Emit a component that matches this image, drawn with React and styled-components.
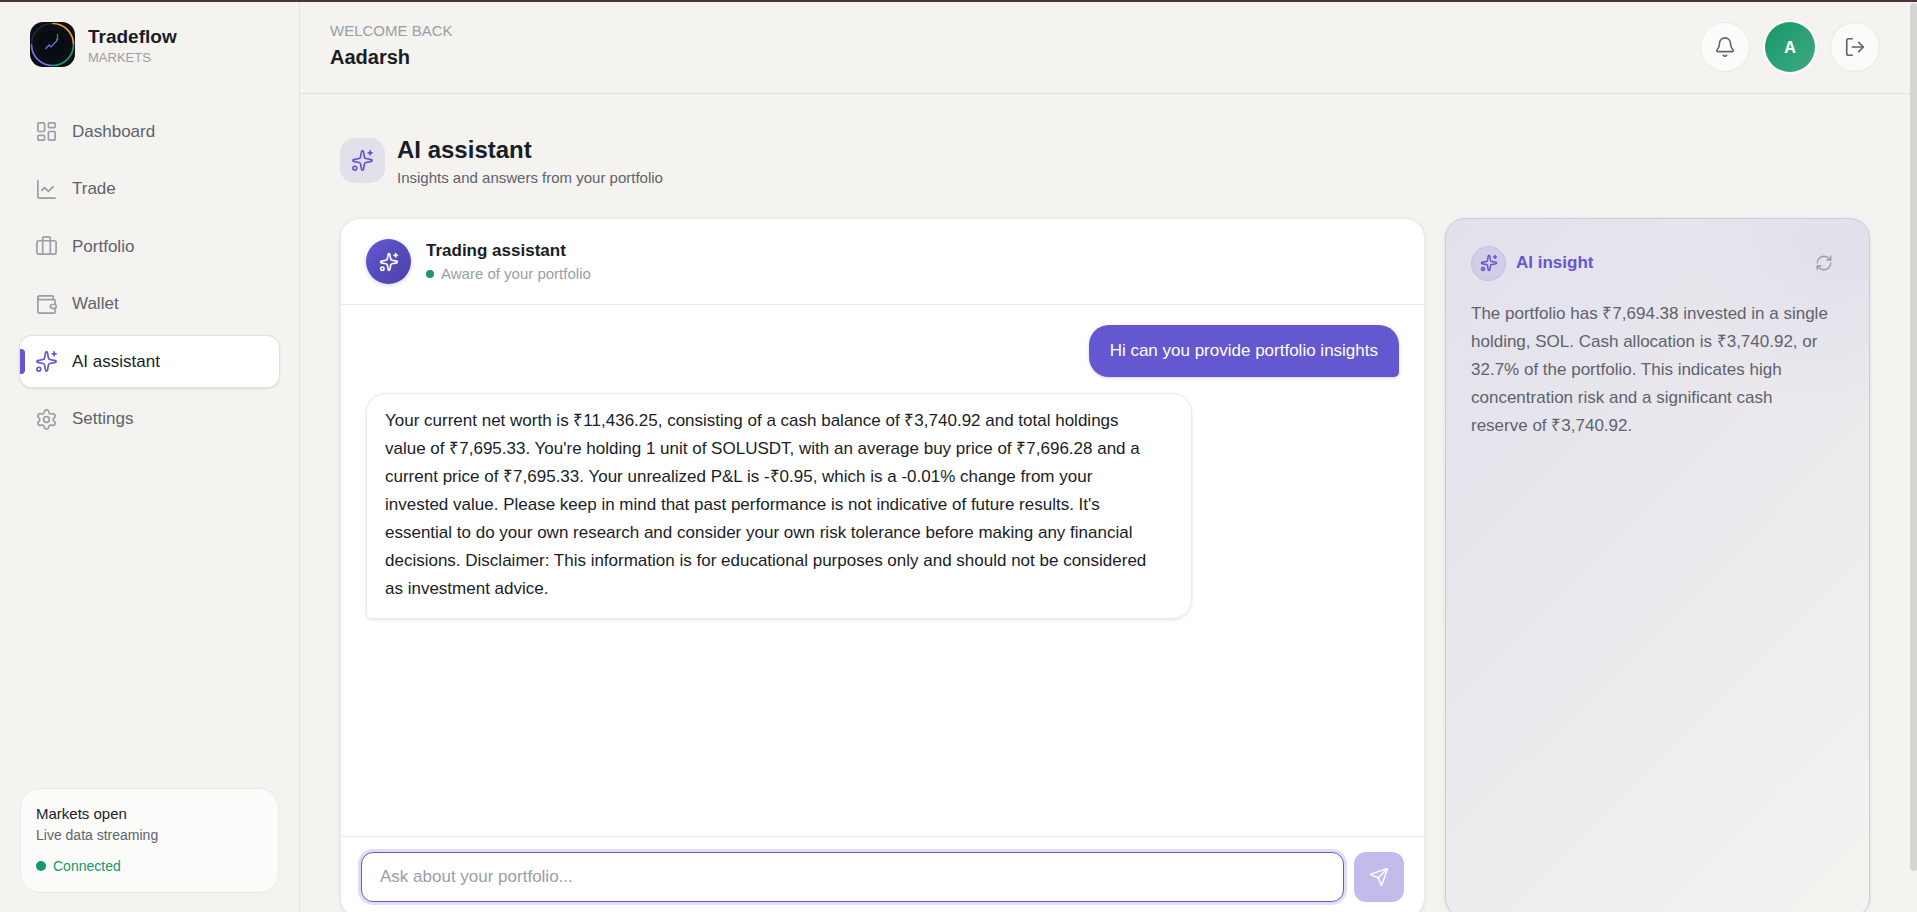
import React, { useState } from 'react'
import styled, { createGlobalStyle, css } from 'styled-components'
import {
  Bell,
  Briefcase,
  ChartLine,
  LayoutDashboard,
  LogOut,
  RefreshCw,
  Send,
  Settings,
  Sparkles,
  Wallet
} from 'lucide-react'

const navItems = [
  { label: 'Dashboard', icon: LayoutDashboard },
  { label: 'Trade', icon: ChartLine },
  { label: 'Portfolio', icon: Briefcase },
  { label: 'Wallet', icon: Wallet },
  { label: 'AI assistant', icon: Sparkles, active: true },
  { label: 'Settings', icon: Settings }
]

const messages = [
  { id: 1, from: 'user', text: 'Hi can you provide portfolio insights' },
  {
    id: 2,
    from: 'assistant',
    text:
      "Your current net worth is ₹11,436.25, consisting of a cash balance of ₹3,740.92 and total holdings value of ₹7,695.33. You're holding 1 unit of SOLUSDT, with an average buy price of ₹7,696.28 and a current price of ₹7,695.33. Your unrealized P&L is -₹0.95, which is a -0.01% change from your invested value. Please keep in mind that past performance is not indicative of future results. It's essential to do your own research and consider your own risk tolerance before making any financial decisions. Disclaimer: This information is for educational purposes only and should not be considered as investment advice."
  }
]

const Logo = () => (
  <LogoSvg viewBox="0 0 45 45" aria-hidden="true">
    <rect width="45" height="45" rx="13" fill="#0b0e15" />
    <circle cx="22" cy="22" r="13" fill="#080b12" />
    <g fill="none" strokeWidth="1.7">
      <path d="M1.5 22.5a21 21 0 0 1 21-21" stroke="#23283a" />
      <path d="M22.5 1.5a21 21 0 0 1 21 21" stroke="#f0a02c" />
      <path d="M43.5 22.5a21 21 0 0 1-21 21" stroke="#1c9a6c" />
      <path d="M22.5 43.5a21 21 0 0 1-21-21" stroke="#7b6fe0" />
      <path d="M15.5 27l3.500-4 2 2 6.500-7" stroke="#7b6fe0" strokeWidth="1.2" />
      <path d="M26 17.5h1.500v-5.500" stroke="#1c9a6c" strokeWidth="1.4" />
    </g>
  </LogoSvg>
)

const App = () => {
  const [draft, setDraft] = useState('')

  return (
    <Page>
      <GlobalStyle />
      <TopEdge />
      <Body>
        <Sidebar>
          <Brand>
            <Logo />
            <div>
              <BrandName>Tradeflow</BrandName>
              <BrandTag>MARKETS</BrandTag>
            </div>
          </Brand>
          <Nav>
            {navItems.map(({ label, icon: Icon, active }) => (
              <NavLink key={label} href="#" $active={active}>
                <Icon size={23} strokeWidth={1.75} />
                {label}
              </NavLink>
            ))}
          </Nav>
          <MarketStatus>
            <StatusTitle>Markets open</StatusTitle>
            <StatusText>Live data streaming</StatusText>
            <Connection><Dot $size={10} />Connected</Connection>
          </MarketStatus>
        </Sidebar>

        <Main>
          <Header>
            <div>
              <Welcome>WELCOME BACK</Welcome>
              <UserName>Aadarsh</UserName>
            </div>
            <Actions>
              <RoundButton aria-label="Notifications"><Bell size={22} strokeWidth={1.75} /></RoundButton>
              <Avatar aria-label="Account">A</Avatar>
              <RoundButton aria-label="Log out"><LogOut size={22} strokeWidth={1.75} /></RoundButton>
            </Actions>
          </Header>

          <Content>
            <PageTitle>
              <TitleIcon><Sparkles size={23} strokeWidth={1.75} /></TitleIcon>
              <div>
                <h1>AI assistant</h1>
                <p>Insights and answers from your portfolio</p>
              </div>
            </PageTitle>

            <Panels>
              <Chat>
                <ChatHeader>
                  <BotIcon><Sparkles size={20} strokeWidth={2} /></BotIcon>
                  <div>
                    <h2>Trading assistant</h2>
                    <Aware><Dot $size={8} />Aware of your portfolio</Aware>
                  </div>
                </ChatHeader>
                <Messages>
                  {messages.map(message => (
                    <Bubble key={message.id} $own={message.from === 'user'}>{message.text}</Bubble>
                  ))}
                </Messages>
                <Composer onSubmit={e => e.preventDefault()}>
                  <Input
                    aria-label="Message"
                    placeholder="Ask about your portfolio..."
                    value={draft}
                    onChange={e => setDraft(e.target.value)}
                  />
                  <SendButton type="submit" aria-label="Send" disabled={!draft}>
                    <Send size={20} strokeWidth={1.75} />
                  </SendButton>
                </Composer>
              </Chat>

              <Insight>
                <InsightHeader>
                  <InsightIcon><Sparkles size={18} strokeWidth={2} /></InsightIcon>
                  <h2>AI insight</h2>
                  <RefreshButton aria-label="Refresh insight"><RefreshCw size={18} strokeWidth={1.75} /></RefreshButton>
                </InsightHeader>
                <InsightText>
                  The portfolio has ₹7,694.38 invested in a single holding, SOL. Cash allocation is ₹3,740.92, or 32.7% of the portfolio. This indicates high concentration risk and a significant cash reserve of ₹3,740.92.
                </InsightText>
              </Insight>
            </Panels>
          </Content>
        </Main>
        <ScrollTrack><ScrollThumb /></ScrollTrack>
      </Body>
    </Page>
  )
}

const GlobalStyle = createGlobalStyle`
  * {
    box-sizing: border-box;
  }

  body {
    margin: 0;
    background: #f4f3ef;
    color: #1a1d26;
    font-family: "Liberation Sans", Arial, sans-serif;
    font-size: 17px;
  }

  h1, h2, p {
    margin: 0;
  }

  button, input {
    font: inherit;
  }

  button {
    padding: 0;
    border: 0;
    cursor: pointer;
  }

  svg {
    flex-shrink: 0;
  }
`

const Page = styled.div`
  height: 100vh;
  display: flex;
  flex-direction: column;
  overflow: hidden;
`

const TopEdge = styled.div`
  flex: 0 0 2px;
  background: #4b3242;
`

const Body = styled.div`
  flex: 1;
  min-height: 0;
  display: flex;
`

const Sidebar = styled.aside`
  flex: 0 0 300px;
  display: flex;
  flex-direction: column;
  padding: 20px 20px 19px;
  border-right: 1px solid #e3e2df;
`

const Brand = styled.div`
  display: flex;
  align-items: flex-end;
  gap: 13px;
  padding: 0 10px;
  margin-bottom: 39px;
`

const LogoSvg = styled.svg`
  width: 45px;
  height: 45px;
`

const BrandName = styled.div`
  font-size: 19px;
  line-height: 24px;
  font-weight: 700;
`

const BrandTag = styled.div`
  color: #9b9da7;
  font-size: 13px;
  line-height: 18px;
`

const Nav = styled.nav`
  height: 339px;
  display: flex;
  flex-direction: column;
  justify-content: space-between;
`

const NavLink = styled.a`
  height: 51px;
  position: relative;
  display: flex;
  align-items: center;
  gap: 14px;
  padding: 0 15px;
  border-radius: 12px;
  color: #5f626d;
  text-decoration: none;

  svg {
    color: #9b9da7;
  }

  ${({ $active }) => $active && css`
    background: #fff;
    color: #1a1d26;
    box-shadow: 0 0 0 1px #e3e2df, 0 1px 3px rgba(20, 20, 40, 0.2);

    svg {
      color: #6358d0;
    }

    &:before {
      content: "";
      position: absolute;
      left: 0;
      width: 5px;
      height: 25px;
      border-radius: 0 4px 4px 0;
      background: #6358d0;
    }
  `}
`

const MarketStatus = styled.div`
  margin-top: auto;
  padding: 15px 15px 16px;
  border: 1px solid #e9e9e8;
  border-radius: 20px;
  background: #fbfbf9;
`

const StatusTitle = styled.div`
  font-size: 15px;
  line-height: 20px;
`

const StatusText = styled.div`
  color: #5f626d;
  font-size: 14px;
  line-height: 22px;
`

const Connection = styled.div`
  display: flex;
  align-items: center;
  gap: 7px;
  margin-top: 10px;
  color: #17986b;
  font-size: 14px;
  line-height: 20px;
`

const Dot = styled.span`
  width: ${({ $size }) => $size}px;
  height: ${({ $size }) => $size}px;
  border-radius: 50%;
  background: #17986b;
`

const Main = styled.main`
  flex: 1;
  min-width: 0;
  overflow-y: auto;
  scrollbar-width: none;
`

const Header = styled.header`
  display: flex;
  align-items: center;
  justify-content: space-between;
  padding: 19px 30px 20px;
  border-bottom: 1px solid #e3e2df;
`

const Welcome = styled.div`
  color: #9b9da7;
  font-size: 15px;
  line-height: 20px;
`

const UserName = styled.div`
  font-size: 20px;
  line-height: 32px;
  font-weight: 700;
`

const Actions = styled.div`
  display: flex;
  gap: 15px;
`

const RoundButton = styled.button`
  width: 50px;
  height: 50px;
  display: flex;
  align-items: center;
  justify-content: center;
  border: 1px solid #e9e9e8;
  border-radius: 50%;
  background: #fbfbf9;
  color: #5f626d;
`

const Avatar = styled.button`
  width: 50px;
  height: 50px;
  border-radius: 50%;
  background: linear-gradient(135deg, #17986b, #40a880);
  box-shadow: 0 0 0 2px #fff;
  color: #fff;
  font-family: "Open Sans", sans-serif;
  font-size: 16px;
  line-height: 20px;
  font-weight: 700;
`

const Content = styled.div`
  padding: 40px;
`

const PageTitle = styled.div`
  display: flex;
  align-items: flex-start;
  gap: 12px;
  margin-bottom: 28px;

  h1 {
    font-size: 24px;
    line-height: 32px;
  }

  p {
    color: #5f626d;
    font-size: 15px;
    line-height: 24px;
  }
`

const TitleIcon = styled.div`
  width: 45px;
  height: 45px;
  display: flex;
  align-items: center;
  justify-content: center;
  margin-top: 4px;
  border-radius: 15px;
  background: #e2e0ea;
  color: #6358d0;
`

const Panels = styled.div`
  display: grid;
  grid-template-columns: minmax(0, 1fr) 425px;
  gap: 20px;
  min-height: 700px;
`

const Chat = styled.section`
  display: flex;
  flex-direction: column;
  border: 1px solid #eaeaec;
  border-radius: 20px;
  background: #fff;
  box-shadow: 0 1px 4px rgba(20, 20, 40, 0.08);
`

const ChatHeader = styled.div`
  display: flex;
  gap: 15px;
  padding: 20px 25px;
  border-bottom: 1px solid #eaeaec;

  h2 {
    font-size: 17px;
    line-height: 24px;
  }
`

const BotIcon = styled.div`
  width: 45px;
  height: 45px;
  display: flex;
  align-items: center;
  justify-content: center;
  border-radius: 50%;
  background: linear-gradient(135deg, #6358d0, #4a3fa8);
  box-shadow: 0 1px 4px rgba(99, 88, 208, 0.3);
  color: #fff;
`

const Aware = styled.div`
  display: flex;
  align-items: center;
  gap: 7px;
  color: #9b9da7;
  font-size: 15px;
  line-height: 21px;
`

const Messages = styled.div`
  flex: 1;
  display: flex;
  flex-direction: column;
  align-items: flex-start;
  gap: 16px;
  padding: 20px 25px;
`

const Bubble = styled.div`
  max-width: 80%;
  padding: 13px 35px 15px 18px;
  border: 1px solid #eaeaec;
  border-radius: 20px 20px 20px 5px;
  line-height: 28px;
  box-shadow: 0 1px 3px rgba(20, 20, 40, 0.12);

  ${({ $own }) => $own && css`
    align-self: flex-end;
    padding: 12px 21px;
    border: 0;
    border-radius: 20px 20px 5px 20px;
    background: #6358d0;
    color: #fff;
    box-shadow: 0 1px 3px rgba(99, 88, 208, 0.3);
  `}
`

const Composer = styled.form`
  display: flex;
  gap: 10px;
  padding: 15px 20px;
  border-top: 1px solid #eaeaec;
`

const Input = styled.input`
  flex: 1;
  min-width: 0;
  height: 50px;
  padding: 0 18px;
  border: 1px solid #6358d0;
  border-radius: 12px;
  outline: 0;
  box-shadow: 0 0 0 3px rgba(99, 88, 208, 0.2);
  color: #1a1d26;

  &::placeholder {
    color: #9b9da7;
  }
`

const SendButton = styled.button`
  width: 50px;
  height: 50px;
  display: flex;
  align-items: center;
  justify-content: center;
  border-radius: 12px;
  background: #6358d0;
  color: #fff;

  &:disabled {
    background: #c1bcec;
  }
`

const Insight = styled.section`
  padding: 24px 25px;
  border: 1px solid #cbc7e8;
  border-radius: 20px;
  background:
    radial-gradient(circle at 95% 5%, rgba(99, 88, 208, 0.06), transparent 160px),
    linear-gradient(135deg, #e2e0eb, #f4f3ef);
  box-shadow: 0 1px 4px rgba(20, 20, 40, 0.08);
`

const InsightHeader = styled.div`
  display: flex;
  align-items: center;
  gap: 10px;
  margin-bottom: 17px;

  h2 {
    color: #6358d0;
    font-size: 17px;
  }
`

const InsightIcon = styled.div`
  width: 35px;
  height: 35px;
  display: flex;
  align-items: center;
  justify-content: center;
  border: 1px solid #c3bee6;
  border-radius: 50%;
  background: #d2cee6;
  color: #6358d0;
`

const RefreshButton = styled.button`
  width: 40px;
  height: 40px;
  display: flex;
  align-items: center;
  justify-content: center;
  margin-left: auto;
  background: none;
  color: #9b9da7;
`

const InsightText = styled.p`
  max-width: 360px;
  color: #5f626d;
  line-height: 28px;
`

const ScrollTrack = styled.div`
  flex: 0 0 7px;
  padding-top: 1px;
`

const ScrollThumb = styled.div`
  height: 95.5%;
  border-radius: 4px;
  background: #d5d5d3;
`

export default App
